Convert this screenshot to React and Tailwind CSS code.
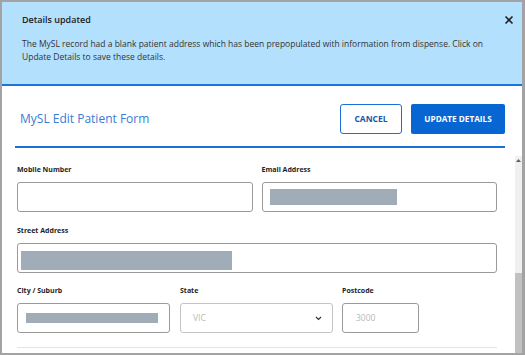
import React from "react";

function Label({ children }) {
  return <div className="text-[7px] font-bold text-[#1e1e1e] h-[12px] leading-[12px]">{children}</div>;
}

export default function App() {
  return (
    <div className="w-[525px] h-[355px] overflow-hidden bg-white border-l-2 border-t-2 border-b-2 border-r-[3px] border-[#a3a3a3] flex flex-col font-['Open_Sans',sans-serif]">
      {/* Banner */}
      <div className="h-[84px] shrink-0 bg-[#b3e0fd] border-b-2 border-[#1b74d8] pl-[20px] pr-[8px] pt-[11px] text-[#333]">
        <div className="flex items-center justify-between">
          <div className="text-[9px] font-semibold text-[#222]">Details updated</div>
          <svg width="10" height="10" viewBox="0 0 10 10">
            <path d="M1.5 1.5 L8.5 8.5 M8.5 1.5 L1.5 8.5" stroke="#222" strokeWidth="1.6" />
          </svg>
        </div>
        <p className="mt-[10px] text-[8.5px] leading-[13px] text-[#333] w-[470px]">
          The MySL record had a blank patient address which has been prepopulated with information from dispense. Click on Update Details to save these details.
        </p>
      </div>

      {/* Header */}
      <div className="shrink-0 pl-[13px] pr-[17px]">
        <div className="flex items-center justify-between h-[62px] border-b-2 border-[#1b6fd6] pl-[5px] pt-[6px]">
          <div className="text-[12px] text-[#3a7bd5]">MySL Edit Patient Form</div>
          <div className="flex items-center gap-[9px]">
            <button className="w-[62px] h-[30px] rounded-[3px] border border-[#1b6fd6] bg-white text-[8.5px] font-bold text-[#1a56a8]">
              CANCEL
            </button>
            <button className="w-[94px] h-[30px] rounded-[2px] bg-[#0866d3] text-[8.2px] font-bold text-white">
              UPDATE DETAILS
            </button>
          </div>
        </div>
      </div>

      {/* Form area with scrollbar */}
      <div className="flex-1 flex min-h-0">
        <div className="flex-1 pl-[15px] pr-[18px] pt-[16px]">
          <div className="grid grid-cols-2 gap-x-[9px]">
            <div>
              <Label>Mobile Number</Label>
              <div className="mt-[6px] h-[30px] border border-[#9a9a9a] rounded-[3px]" />
            </div>
            <div>
              <Label>Email Address</Label>
              <div className="mt-[6px] h-[30px] border border-[#9a9a9a] rounded-[3px] flex items-center pl-[7px]">
                <div className="h-[16px] w-[127px] bg-[#a0adb8]" />
              </div>
            </div>
          </div>

          <div className="mt-[13px]">
            <Label>Street Address</Label>
            <div className="mt-[6px] h-[30px] border border-[#9a9a9a] rounded-[3px] flex items-end pl-[3px] pb-[2px]">
              <div className="h-[19px] w-[211px] bg-[#a0adb8]" />
            </div>
          </div>

          <div className="mt-[12px] flex">
            <div className="w-[153px]">
              <Label>City / Suburb</Label>
              <div className="mt-[6px] h-[30px] border border-[#9a9a9a] rounded-[3px] flex items-center pl-[8px]">
                <div className="h-[10px] w-[132px] bg-[#a0adb8]" />
              </div>
            </div>
            <div className="w-[153px] ml-[10px]">
              <Label>State</Label>
              <div className="mt-[6px] h-[30px] border border-[#c4c4c4] rounded-[3px] flex items-center justify-between pl-[12px] pr-[10px]">
                <span className="text-[8.5px] text-[#b8b8b8]">VIC</span>
                <svg width="7" height="5" viewBox="0 0 7 5">
                  <path d="M1 1 L3.5 3.5 L6 1" stroke="#333" strokeWidth="1.2" fill="none" />
                </svg>
              </div>
            </div>
            <div className="w-[77px] ml-[9px]">
              <Label>Postcode</Label>
              <div className="mt-[6px] h-[30px] border border-[#9a9a9a] rounded-[3px] flex items-center pl-[13px]">
                <span className="text-[8.5px] text-[#b8b8b8]">3000</span>
              </div>
            </div>
          </div>

          <div className="mt-[14px] h-px bg-[#e4e4e4]" />
        </div>

        {/* Scrollbar */}
        <div className="w-[7px] shrink-0 mt-[8px] bg-[#f0f0f0] flex flex-col">
          <div className="h-[8px] flex items-center justify-center">
            <svg width="5" height="3" viewBox="0 0 5 3">
              <path d="M0 3 L2.5 0 L5 3 Z" fill="#606060" />
            </svg>
          </div>
          <div className="mt-[109px] flex-1 bg-[#c1c1c1]" />
        </div>
      </div>
    </div>
  );
}
